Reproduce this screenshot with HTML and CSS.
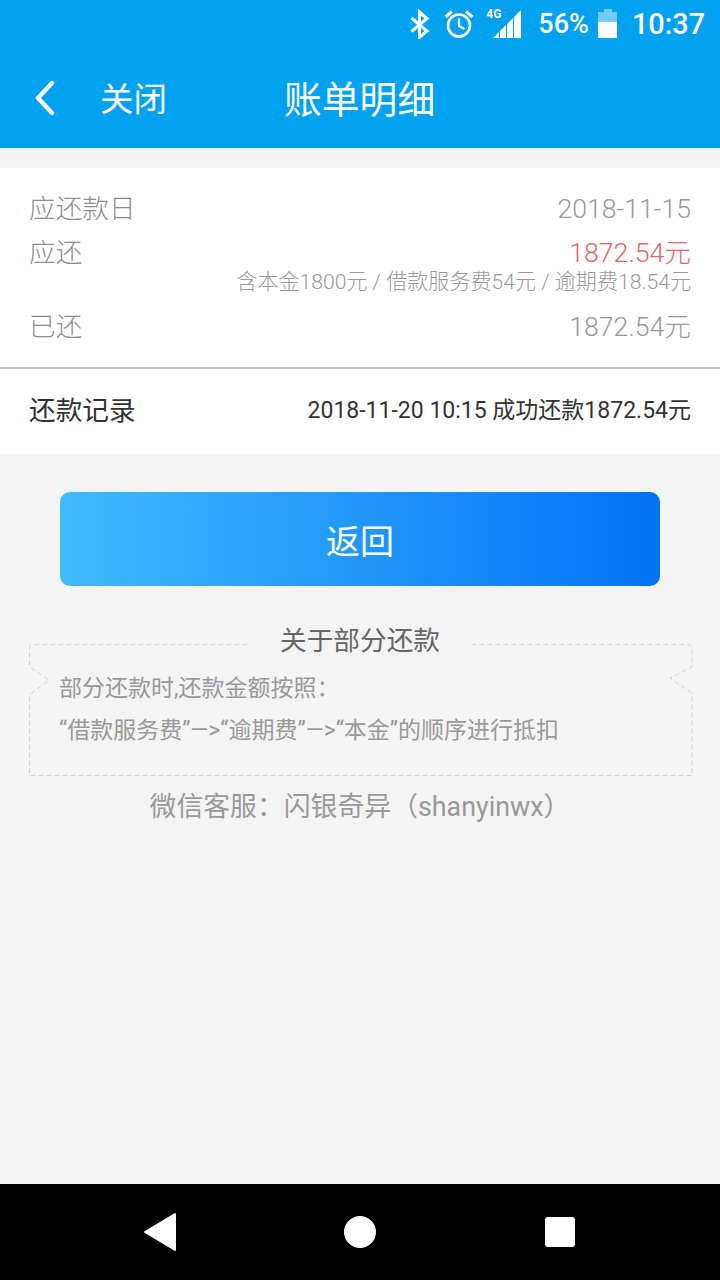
FILE: index.html
```html
<!DOCTYPE html>
<html lang="zh-CN">
<head>
    <meta charset="UTF-8">
    <meta name="viewport" content="width=device-width, initial-scale=1.0">
    <title>账单明细</title>

    <link rel="stylesheet" href="styles.css">
</head>

<body>
    <div class="statusbar">
        <svg class="ic-bt" width="22" height="30" viewBox="0 0 22 30">
            <path d="M2.5 9 L18 22 L10.5 28.5 V3 L18 9.5 L2.5 22.5" fill="none" stroke="#fff" stroke-width="3"/>
        </svg>
        <svg class="ic-alarm" width="30" height="30" viewBox="0 0 30 30">
            <circle cx="15" cy="16.5" r="11" fill="none" stroke="#fff" stroke-width="2.6"/>
            <path d="M15 9.5 V17 L20.5 20" fill="none" stroke="#fff" stroke-width="2.2"/>
            <path d="M1.5 8 L8 2.5 M28.5 8 L22 2.5" stroke="#fff" stroke-width="3"/>
        </svg>
        <div class="signal">
            <span class="net">4G</span>
            <svg width="28" height="30" viewBox="0 0 28 30">
                <path d="M0 29 L6 23 V29 Z M7 29 V22 L13 16 V29 Z M14 29 V15 L20 9 V29 Z M21 29 V8 L28 1 V29 Z" fill="#fff"/>
            </svg>
        </div>
        <span class="pct">56%</span>
        <svg class="ic-batt" width="20" height="30" viewBox="0 0 20 30">
            <path d="M6 0 H14 V3 H19 V13 H0 V3 H6 Z" fill="#fff" opacity="0.45"/>
            <rect x="0" y="13" width="19" height="16" fill="#fff"/>
        </svg>
        <span class="clock">10:37</span>
    </div>

    <div class="header">
        <svg class="back" width="22" height="36" viewBox="0 0 22 36">
            <path d="M18 3 L4 18 L18 33" fill="none" stroke="#fff" stroke-width="4.4" stroke-linecap="round" stroke-linejoin="round"/>
        </svg>
        <span class="close">关闭</span>
        <span class="title">账单明细</span>
    </div>

    <div class="card">
        <div class="bill">
            <div class="row">
                <label>应还款日</label>
                <span class="val">2018-11-15</span>
            </div>
            <div class="row row-due">
                <label>应还</label>
                <div class="due">
                    <span class="val red">1872.54元</span>
                    <span class="detail">含本金1800元 / 借款服务费54元 / 逾期费18.54元</span>
                </div>
            </div>
            <div class="row row-paid">
                <label>已还</label>
                <span class="val">1872.54元</span>
            </div>
        </div>
        <div class="record">
            <label>还款记录</label>
            <span>2018-11-20 10:15 成功还款1872.54元</span>
        </div>
    </div>

    <button class="btn-back">返回</button>

    <div class="notice">
        <svg class="notice-border" width="668" height="140" viewBox="0 0 668 140">
            <path d="M221 4.5 H7 Q3.5 4.5 3.5 8 V27 L23 40 L3.5 55 V135.5 H666 V53 L644 38 L666 27 V8 Q666 4.5 662 4.5 H446" fill="none" stroke="#d2d2d2" stroke-width="1" stroke-dasharray="5 3"/>
        </svg>
        <h3>关于部分还款</h3>
        <p>部分还款时,还款金额按照：</p>
        <p>“借款服务费”—>“逾期费”—>“本金”的顺序进行抵扣</p>
    </div>

    <div class="wechat">微信客服：闪银奇异（shanyinwx）</div>

    <div class="navbar">
        <svg width="34" height="40" viewBox="0 0 34 40"><path d="M32 2 V38 L2 20 Z" fill="#fff" stroke="#fff" stroke-width="2" stroke-linejoin="round"/></svg>
        <div class="nav-home"></div>
        <div class="nav-recent"></div>
    </div>
</body>
</html>
```

FILE: styles.css
```css
*{
    box-sizing: border-box;
}

body{
    margin: 0;
    width: 720px;
    height: 1280px;
    display: flex;
    flex-direction: column;
    background-color: #f4f4f4;
    font-family: Roboto, "Noto Sans CJK SC", sans-serif;
    font-weight: 300;
    overflow: hidden;
}

.statusbar{
    height: 48px;
    display: flex;
    align-items: center;
    justify-content: flex-end;
    padding-right: 15px;
    background-color: #00a2f0;
    color: white;
    font-weight: 500;
}

.ic-bt{
    margin-right: 13px;
}

.ic-alarm{
    margin-right: 19px;
}

.signal{
    position: relative;
    width: 28px;
    margin-right: 17px;
    display: flex;
}

.net{
    position: absolute;
    left: -7px;
    top: -2px;
    font-size: 12px;
    font-weight: 700;
}

.pct{
    font-size: 27px;
    margin-right: 9px;
}

.ic-batt{
    margin-right: 14px;
}

.clock{
    font-size: 28.8px;
}

.header{
    height: 100px;
    display: flex;
    align-items: center;
    background-color: #00a2f0;
    color: white;
    font-weight: 400;
    padding-left: 34px;
}

.back{
    margin-right: 44px;
}

.close{
    font-size: 33.5px;
    margin-right: 117px;
    margin-bottom: 3px;
}

.title{
    font-size: 37.8px;
    margin-bottom: 3px;
}

.card{
    margin-top: 20px;
    background-color: white;
    height: 286px;
    display: flex;
    flex-direction: column;
}

.bill{
    height: 201px;
    padding: 21px 29px 0;
    border-bottom: 2px solid #c4c4c4;
}

.row{
    display: flex;
    justify-content: space-between;
    font-size: 26.67px;
    line-height: 40px;
    color: #999;
}

.row label{
    color: #8e8e8e;
}

.row-due{
    margin-top: 4px;
}

.row-paid{
    margin-top: 15px;
}

.due{
    display: flex;
    flex-direction: column;
    align-items: flex-end;
}

.red{
    color: #e2666b;
}

.detail{
    font-size: 21.1px;
    line-height: 20px;
    margin-top: -1px;
    color: #999;
}

.record{
    display: flex;
    justify-content: space-between;
    align-items: center;
    height: 84px;
    padding: 0 29px 6px;
    color: #333;
    font-weight: 400;
    font-size: 23px;
}

.record label{
    font-size: 26.67px;
}

.btn-back{
    display: block;
    margin: 38px 60px 0;
    height: 94px;
    border: none;
    border-radius: 10px;
    background: linear-gradient(90deg, #3fbcff, #0073f5);
    color: white;
    font-family: inherit;
    font-weight: 400;
    font-size: 34px;
}

.notice{
    position: relative;
    margin: 34px 26px 0;
    height: 161px;
    padding-top: 1px;
    color: #999;
    font-size: 23px;
}

.notice-border{
    position: absolute;
    left: 0;
    top: 20px;
}

.notice h3{
    position: relative;
    margin: 0 0 7px;
    text-align: center;
    font-size: 26.67px;
    font-weight: 400;
    line-height: 40px;
    color: #666;
}

.notice p{
    position: relative;
    margin: 0 0 0 33px;
    line-height: 42px;
    font-weight: 400;
}

.wechat{
    text-align: center;
    font-size: 26.85px;
    font-weight: 400;
    line-height: 40px;
    color: #999;
    margin-top: 6px;
}

.navbar{
    margin-top: auto;
    height: 96px;
    background-color: black;
    display: flex;
    align-items: center;
    padding-left: 143px;
}

.nav-home{
    width: 32px;
    height: 32px;
    border-radius: 50%;
    background-color: white;
    margin-left: 167px;
}

.nav-recent{
    width: 30px;
    height: 30px;
    border-radius: 3px;
    background-color: white;
    margin-left: 169px;
}
```
